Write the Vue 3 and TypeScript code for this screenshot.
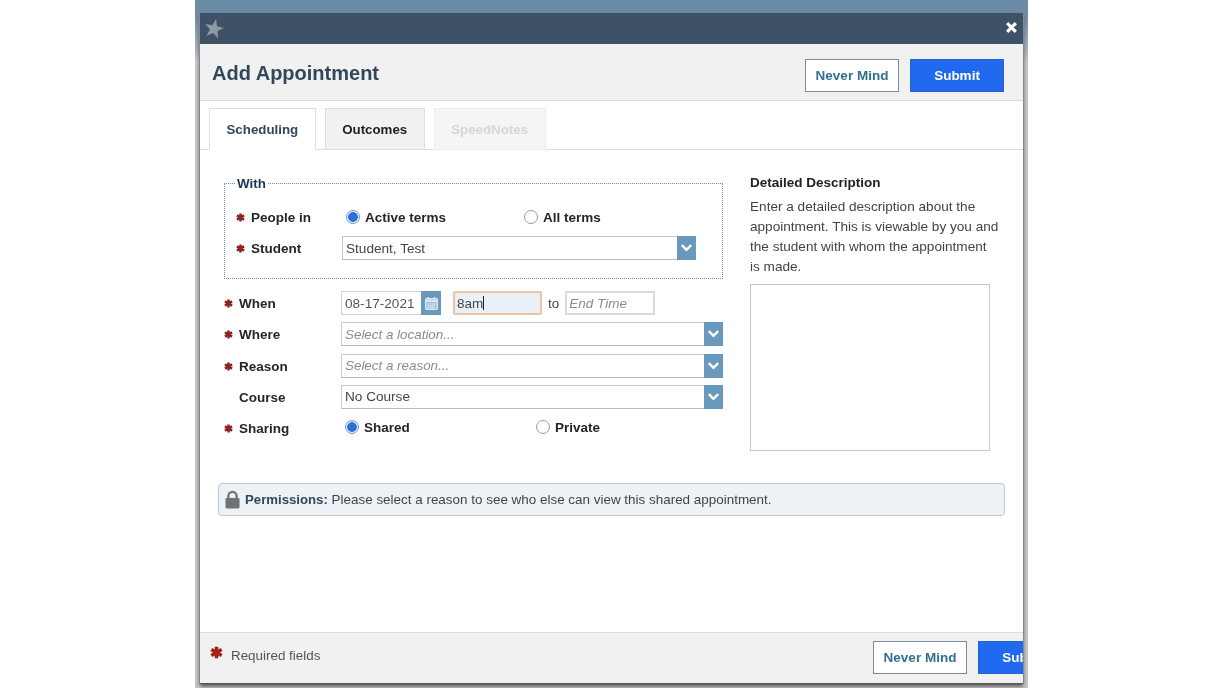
<script setup lang="ts">
const rows = [
  { label: 'Where', req: true, value: 'Select a location...', ph: true },
  { label: 'Reason', req: true, value: 'Select a reason...', ph: true },
  { label: 'Course', req: false, value: 'No Course', ph: false },
];
const starPath = 'M5 .5v9M1 2.7l8 4.6M9 2.7l-8 4.6';
</script>

<template>
  <div class="page">
    <div class="backdrop">
      <div class="modal">
        <div class="titlebar">
          <svg class="logo" viewBox="0 0 24 24"><path d="M14.3 1.2L15.3 9L22.9 10.9L15.9 14.25L16.5 22.05L11.1 16.4L3.8 19.4L7.5 12.5L2.5 6.5L10.2 7.9Z" fill="#8d99a5" /></svg>
          <svg class="close" viewBox="0 0 12 12"><path d="M2 2l8 8M10 2l-8 8" stroke="#fff" stroke-width="3" /></svg>
        </div>
        <header class="head">
          <h1>Add Appointment</h1>
          <div class="actions">
            <button class="btn ghost">Never Mind</button>
            <button class="btn primary">Submit</button>
          </div>
        </header>
        <nav class="tabs">
          <div class="tab active">Scheduling</div>
          <div class="tab">Outcomes</div>
          <div class="tab disabled">SpeedNotes</div>
        </nav>
        <main class="content">
          <div class="columns">
            <div class="left">
              <fieldset class="with">
                <legend>With</legend>
                <div class="row radios first">
                  <label class="lbl"><svg class="star" viewBox="0 0 10 10"><path :d="starPath" stroke="#8f2323" stroke-width="2.8" /></svg>People in</label>
                  <div class="radio-a"><span class="radio on"></span>Active terms</div>
                  <div class="radio-b"><span class="radio"></span>All terms</div>
                </div>
                <div class="row">
                  <label class="lbl"><svg class="star" viewBox="0 0 10 10"><path :d="starPath" stroke="#8f2323" stroke-width="2.8" /></svg>Student</label>
                  <div class="select student">
                    <span class="val">Student, Test</span>
                    <span class="drop"><svg viewBox="0 0 14 10"><path d="M2 2l5 5 5-5" fill="none" stroke="#fff" stroke-width="2.6" /></svg></span>
                  </div>
                </div>
              </fieldset>
              <div class="form">
                <div class="row">
                  <label class="lbl"><svg class="star" viewBox="0 0 10 10"><path :d="starPath" stroke="#8f2323" stroke-width="2.8" /></svg>When</label>
                  <div class="when">
                    <div class="date">
                      <span class="val">08-17-2021</span>
                      <span class="cal"><svg viewBox="0 0 14 14"><rect x="1.5" y="2.5" width="11" height="10" rx="1" fill="#a5c3dc" stroke="#dbe6ef" stroke-width="1.2" /><path d="M1.5 4.5h11" stroke="#dbe6ef" stroke-width="2" /><path d="M3.5 7.5h7M3.5 9.2h7M3.5 10.9h7" stroke="#e6eef5" stroke-dasharray="1.2 .6" /><path d="M4 1v2M10 1v2" stroke="#dbe6ef" stroke-width="1.4" /></svg></span>
                    </div>
                    <div class="time focus">8am<i class="caret"></i></div>
                    <span class="to">to</span>
                    <div class="time ph">End Time</div>
                  </div>
                </div>
                <div v-for="r in rows" :key="r.label" class="row">
                  <label class="lbl">
                    <svg v-if="r.req" class="star" viewBox="0 0 10 10"><path :d="starPath" stroke="#8f2323" stroke-width="2.8" /></svg>
                    <span v-else class="star"></span>{{ r.label }}
                  </label>
                  <div class="select">
                    <span class="val" :class="{ ph: r.ph }">{{ r.value }}</span>
                    <span class="drop"><svg viewBox="0 0 14 10"><path d="M2 2l5 5 5-5" fill="none" stroke="#fff" stroke-width="2.6" /></svg></span>
                  </div>
                </div>
                <div class="row radios">
                  <label class="lbl"><svg class="star" viewBox="0 0 10 10"><path :d="starPath" stroke="#8f2323" stroke-width="2.8" /></svg>Sharing</label>
                  <div class="radio-a shared"><span class="radio on"></span>Shared</div>
                  <div class="radio-b private"><span class="radio"></span>Private</div>
                </div>
              </div>
            </div>
            <aside class="right">
              <h2>Detailed Description</h2>
              <p>Enter a detailed description about the appointment. This is viewable by you and the student with whom the appointment is made.</p>
              <div class="area"></div>
            </aside>
          </div>
          <div class="perm">
            <svg class="lock" viewBox="0 0 16 20"><path d="M3.6 10V6.2a4.4 4.4 0 0 1 8.8 0V10" fill="none" stroke="#6d7276" stroke-width="2.4" /><rect x="0.5" y="8.5" width="15" height="11" rx="1.5" fill="#6d7276" /></svg>
            <span><b>Permissions:</b> Please select a reason to see who else can view this shared appointment.</span>
          </div>
        </main>
        <footer class="foot">
          <div class="req">
            <svg class="bigstar" viewBox="0 0 10 10"><path :d="starPath" stroke="#a3231b" stroke-width="2.8" /></svg>
            <span>Required fields</span>
          </div>
          <div class="actions clip">
            <button class="btn ghost">Never Mind</button>
            <button class="btn primary">Submit</button>
          </div>
        </footer>
      </div>
    </div>
  </div>
</template>

<style>
html, body { margin: 0; background: #fff; }
</style>

<style scoped>
.page {
  width: 1221px;
  height: 688px;
  overflow: hidden;
  background: #fff;
  font-family: "Liberation Sans", Arial, sans-serif;
  color: #333;
  font-size: 13.5px;
}
.backdrop {
  margin-left: 195px;
  width: 833px;
  height: 688px;
  box-sizing: border-box;
  padding: 13px 5px 5px;
  background: linear-gradient(#6b8ba6 0, #6b8ba6 13px, #a9b0b8 50px, #c8c8c8 62px, #c8c8c8 100%);
}
.modal {
  height: 670px;
  background: #fff;
  display: flex;
  flex-direction: column;
  box-shadow: -1px 0 0 #85888c, 1px 0 0 #85888c, 0 1px 0 #555, 0 3px 4px #444;
  filter: blur(0.35px);
}
.titlebar {
  height: 31px;
  flex: none;
  background: #3f5167;
  display: flex;
  align-items: center;
  justify-content: space-between;
  padding: 0 5px 0 3px;
}
.logo { width: 22px; height: 22px; }
.close { width: 13px; height: 13px; margin-bottom: 2px; }
.head {
  height: 57px;
  box-sizing: border-box;
  flex: none;
  background: #f1f1f1;
  border-bottom: 1px solid #dcdcdc;
  display: flex;
  align-items: center;
  justify-content: space-between;
  padding: 0 19px 0 12px;
}
h1 {
  margin: 3px 0 0;
  font-size: 20px;
  font-weight: 700;
  color: #33475b;
}
.actions { display: flex; gap: 11px; margin-top: 7px; }
.btn {
  width: 94px;
  height: 33px;
  box-sizing: border-box;
  font-family: inherit;
  font-size: 13.5px;
  font-weight: 700;
  padding: 0;
  border-radius: 0;
}
.ghost { background: #fff; border: 1px solid #7c8c99; color: #31708f; }
.primary { background: #2169ee; border: 1px solid #2a63c4; color: #fff; }
.tabs {
  height: 49px;
  flex: none;
  box-sizing: border-box;
  border-bottom: 1px solid #dcdcdc;
  display: flex;
  align-items: flex-end;
  gap: 9px;
  padding-left: 9px;
}
.tab {
  height: 42px;
  box-sizing: border-box;
  margin-bottom: -1px;
  padding: 0 16.5px;
  display: flex;
  align-items: center;
  font-weight: 700;
  font-size: 13.3px;
  background: #f1f1f1;
  border: 1px solid #dedede;
  border-bottom: 1px solid #dcdcdc;
  color: #222;
}
.tab.active { background: #fff; border-bottom-color: #fff; color: #33475b; }
.tab.disabled { color: #d6d6d6; background: #f5f5f5; border-color: #ececec; }
.content { flex: 1; display: flex; flex-direction: column; min-height: 0; padding-top: 24px; }
.columns { display: flex; }
.left { margin-left: 24px; width: 499px; flex: none; }
.right { margin-left: 27px; width: 250px; flex: none; padding-top: 1px; }
.with {
  margin: 0;
  padding: 0 26px 18px 11px;
  box-sizing: border-box;
  height: 105px;
  width: 499px;
  border: 1px dotted #6e94a8;
  min-inline-size: 0;
}
legend {
  font-weight: 700;
  font-size: 13.4px;
  line-height: 16px;
  color: #1d3358;
  padding: 2px 1px 0;
  margin-left: 0;
}
.row { display: flex; align-items: center; height: 24px; margin-top: 7.3px; position: relative; }
.with .first { margin-top: 13px; }
.lbl {
  width: 117px;
  flex: none;
  display: flex;
  align-items: center;
  font-weight: 700;
  color: #262626;
  font-size: 13.5px;
  padding-top: 1px;
}
.with .lbl { width: 106px; }
.star { width: 9px; height: 9px; margin-right: 6px; flex: none; }
.bigstar { width: 13px; height: 13px; margin-top: -7px; }
.form { margin-top: 12px; }
.form .row:first-child { margin-top: 0; }
.select {
  flex: 1;
  height: 24px;
  box-sizing: border-box;
  border: 1px solid #c9c9c9;
  border-bottom-color: #bbb;
  display: flex;
  align-items: center;
  justify-content: space-between;
  color: #444;
  background: #fff;
}
.val { padding-left: 3px; font-size: 13.6px; }
.val.ph { font-size: 13.4px; }
.ph { font-style: italic; color: #8b8b8b; }
.drop {
  width: 19px;
  height: 24px;
  margin: -1px -1px -1px 0;
  background: #6a99be;
  display: flex;
  align-items: center;
  justify-content: center;
}
.drop svg { width: 13px; height: 10px; }
.when { display: flex; align-items: center; }
.date {
  width: 100px;
  height: 24px;
  box-sizing: border-box;
  border: 1px solid #d2d2d2;
  display: flex;
  align-items: center;
  justify-content: space-between;
  color: #555;
}
.cal {
  width: 20px;
  height: 24px;
  margin: -1px -1px -1px 0;
  background: #6a99be;
  display: flex;
  align-items: center;
  justify-content: center;
}
.cal svg { width: 15px; height: 15px; }
.time {
  width: 90px;
  height: 24px;
  box-sizing: border-box;
  border: 2px solid #dcdcdc;
  padding-left: 2px;
  display: flex;
  align-items: center;
  color: #444;
}
.time.ph { color: #8b8b8b; }
.focus {
  width: 89px;
  margin-left: 12px;
  border: 2px solid #ecc4a5;
  background: #eaf0f7;
  border-radius: 2px;
}
.caret { width: 1px; height: 14px; background: #222; }
.to { margin: 0 6px 0 6px; color: #444; }
.radios { color: #262626; font-weight: 700; }
.radio-a, .radio-b { display: flex; align-items: center; gap: 5px; }
.radio-a { width: 178px; margin-left: 4px; }
.shared { width: 191px; margin-left: 4px; margin-top: -2px; }
.private { margin-top: -2px; }
.radio {
  width: 14px;
  height: 14px;
  box-sizing: border-box;
  border-radius: 50%;
  border: 1px solid #9a9a9a;
  background: #fff;
  flex: none;
}
.radio.on {
  border: 1px solid #6d9fd8;
  background: radial-gradient(circle, #2f6fd8 0 4.5px, #e8f0fa 5.2px);
}
.right h2 { margin: 0 0 6px; font-size: 13.5px; line-height: 16px; font-weight: 700; color: #222; }
.right p { margin: 0 0 7px; font-size: 13.6px; line-height: 20px; color: #444; }
.area {
  width: 240px;
  height: 167px;
  box-sizing: border-box;
  border: 1px solid #c9c9c9;
}
.perm {
  margin: 32px 0 0 18px;
  width: 787px;
  height: 33px;
  box-sizing: border-box;
  border: 1px solid #c2c8cc;
  border-radius: 4px;
  background: #edf2f6;
  display: flex;
  align-items: center;
  gap: 5px;
  padding-left: 6px;
  font-size: 13.45px;
  color: #444;
}
.perm b { color: #33475b; font-size: 13.2px; }
.lock { width: 15px; height: 19px; flex: none; }
.foot {
  height: 51px;
  flex: none;
  box-sizing: border-box;
  background: #f1f1f1;
  border-top: 1px solid #dcdcdc;
  display: flex;
  justify-content: space-between;
  align-items: flex-start;
  overflow: hidden;
}
.req { display: flex; align-items: center; gap: 8px; padding: 15px 0 0 10px; color: #555; font-size: 13.4px; }
.foot .actions { margin: 8px -49px 0 0; flex: none; }
</style>
